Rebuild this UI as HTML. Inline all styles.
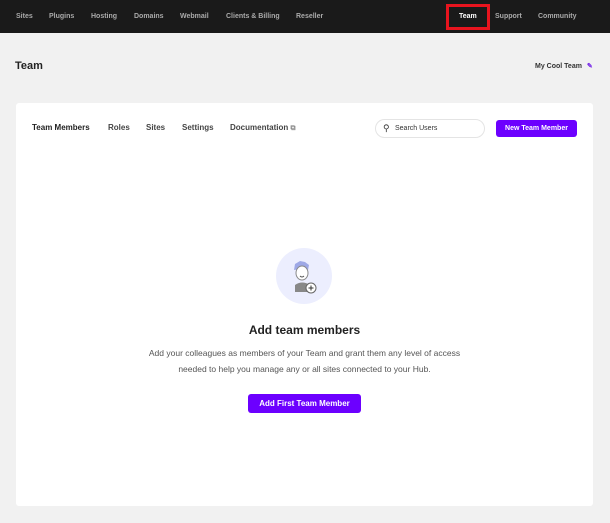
<!DOCTYPE html>
<html><head><style>
*{margin:0;padding:0;box-sizing:border-box}
body{width:610px;height:523px;background:#f1f1f1;font-family:"Liberation Sans",sans-serif;position:relative;overflow:hidden}
.top{position:absolute;left:0;top:0;width:610px;height:33px;background:#1a1a1a}
.top span{position:absolute;top:13px;font-size:7px;font-weight:bold;color:#aaa}
.red{position:absolute;top:4px;width:44px;height:26px;border:3px solid #e8141e}
.abs{position:absolute}
.card{position:absolute;left:16px;top:103px;width:577px;height:403px;background:#fff;border-radius:3px}
.tab{position:absolute;top:20px;font-size:8px;color:#444;font-weight:bold}
</style></head><body>
<div class="top">
<span style="left:16px">Sites</span><span style="left:49px">Plugins</span><span style="left:91px">Hosting</span><span style="left:134px">Domains</span><span style="left:180px">Webmail</span><span style="left:226px">Clients &amp; Billing</span><span style="left:296px">Reseller</span>
<div class="red" style="left:446px"></div><span style="left:459px;color:#fff">Team</span><span style="left:495px">Support</span><span style="left:538px">Community</span>
</div>
<div class="abs" style="left:15px;top:60px;font-size:11px;font-weight:bold;color:#222">Team</div>
<div class="abs" style="left:535px;top:62px;font-size:7px;font-weight:bold;color:#333">My Cool Team <span style="color:#7b2ee8;margin-left:3px">✎</span></div>
<div class="card">
<div class="tab" style="left:16px;color:#222">Team Members</div>
<div class="tab" style="left:92px">Roles</div>
<div class="tab" style="left:130px">Sites</div>
<div class="tab" style="left:166px">Settings</div>
<div class="tab" style="left:214px">Documentation <span style="font-size:7px;color:#888">⧉</span></div>
<div class="abs" style="left:359px;top:16px;width:110px;height:19px;border:1px solid #e4e4e4;border-radius:10px;font-size:7px;color:#333;padding:5px 0 0 19px">Search Users<span class="abs" style="left:7px;top:3px;font-size:9px">⚲</span></div>
<div class="abs" style="left:480px;top:17px;width:81px;height:17px;background:#6c00ff;border-radius:3px;color:#fff;font-size:7px;font-weight:bold;text-align:center;line-height:17px">New Team Member</div>
<div class="abs" style="left:260px;top:145px;width:56px;height:56px;border-radius:50%;background:#eceefe">
<svg width="56" height="56"><path d="M18 22 l1-6 5-3 5 1 4 3 -1 5 -3-2 -5 1z" fill="#9ea8e6"/><ellipse cx="26" cy="25" rx="6" ry="7" fill="#fff" stroke="#888"/><path d="M24 28 q2 2 4 0" stroke="#555" fill="none"/><path d="M19 44 v-7 q7-5 15 0 v7z" fill="#888"/><circle cx="35" cy="40" r="5" fill="#fff" stroke="#666"/><path d="M32.5 40h5M35 37.5v5" stroke="#333"/></svg></div>
<div class="abs" style="left:0;width:577px;top:220px;text-align:center;font-size:12px;font-weight:bold;color:#222">Add team members</div>
<div class="abs" style="left:0;width:577px;top:242px;text-align:center;font-size:8.5px;color:#555;line-height:16px">Add your colleagues as members of your Team and grant them any level of access<br>needed to help you manage any or all sites connected to your Hub.</div>
<div class="abs" style="left:232px;top:291px;width:113px;height:19px;background:#6c00ff;border-radius:3px;color:#fff;font-size:8px;font-weight:bold;text-align:center;line-height:19px">Add First Team Member</div>
</div>
</body></html>
